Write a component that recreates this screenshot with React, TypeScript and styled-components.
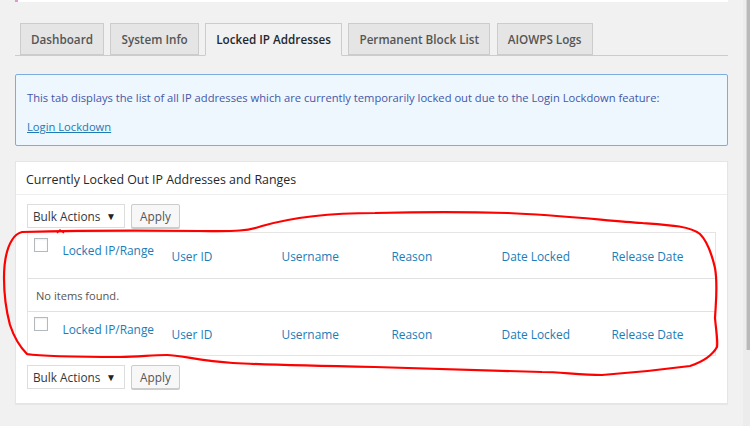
import React from 'react';
import styled, { createGlobalStyle } from 'styled-components';

const GlobalStyle = createGlobalStyle`
  html, body {
    margin: 0;
    padding: 0;
    background: #f1f1f1;
  }
  body {
    font-family: "Open Sans", "Noto Sans", sans-serif;
    color: #444;
  }
  * {
    box-sizing: border-box;
  }
`;

const Screen = styled.div`
  position: relative;
  display: grid;
  grid-template-columns: 743px 7px;
  width: 750px;
  height: 426px;
  overflow: hidden;
  background: #f1f1f1;
`;

const Main = styled.div`
  min-width: 0;
  padding: 0 15px 0 15px;
`;

const Scrollbar = styled.div`
  display: flex;
  justify-content: flex-end;
  align-items: flex-start;
  height: 426px;
  background: #ececec;
`;

const Thumb = styled.div`
  width: 4px;
  height: 350px;
  background: #b9b9b9;
  border-left: 1px solid #d6d6d6;
`;

const TopStrip = styled.div`
  height: 2px;
  background: #fff;
  border-left: 3px solid #dd9cc6;
`;

const TabNav = styled.nav`
  display: flex;
  align-items: flex-end;
  gap: 6.5px;
  margin-top: 21px;
  padding-left: 5px;
  border-bottom: 1px solid #ccc;
`;

const Tab = styled.a<{ $active?: boolean }>`
  display: block;
  height: ${(p) => (p.$active ? '33px' : '32px')};
  margin-bottom: ${(p) => (p.$active ? '-1px' : '0')};
  padding: 0 10px;
  line-height: 31px;
  font-size: 11.7px;
  font-weight: 600;
  white-space: nowrap;
  color: ${(p) => (p.$active ? '#23282d' : '#555')};
  background: ${(p) => (p.$active ? '#f1f1f1' : '#e5e5e5')};
  border: 1px solid #ccc;
  border-bottom-color: ${(p) => (p.$active ? '#f1f1f1' : '#ccc')};
  text-decoration: none;
`;

const InfoBox = styled.div`
  margin-top: 18px;
  padding: 14px 11px 10px;
  background: #eef6fe;
  border: 1px solid #7aaee0;
  border-radius: 2px;
  font-size: 11.2px;
  line-height: 17px;
  color: #4458a6;
`;

const InfoText = styled.p`
  margin: 0;
  white-space: nowrap;
`;

const InfoLink = styled.a`
  display: inline-block;
  margin-top: 12px;
  color: #1e7ab4;
  text-decoration: underline;
`;

const Panel = styled.section`
  margin-top: 15px;
  background: #fff;
  border: 1px solid #e5e5e5;
  box-shadow: 0 1px 1px rgba(0, 0, 0, 0.04);
`;

const PanelTitle = styled.h2`
  margin: 0;
  padding: 10px 10px 6px;
  font-size: 12.4px;
  font-weight: 400;
  line-height: 16px;
  color: #23282d;
  border-bottom: 1px solid #eee;
`;

const PanelBody = styled.div`
  padding: 9px 11px 14px;
`;

const TableNav = styled.div<{ $bottom?: boolean }>`
  display: flex;
  gap: 6px;
  margin: ${(p) => (p.$bottom ? '9px 0 0' : '0 0 4px')};
`;

const Select = styled.div`
  display: flex;
  align-items: center;
  justify-content: space-between;
  width: 98px;
  height: 24px;
  padding: 0 8px 0 5px;
  background: #fff;
  border: 1px solid #ddd;
  font-size: 11.8px;
  color: #32373c;
`;

const Caret = styled.span`
  font-size: 10px;
  line-height: 1;
  color: #222;
`;

const Button = styled.button`
  width: 49px;
  height: 24px;
  padding: 0;
  font-family: inherit;
  font-size: 11.8px;
  color: #555;
  background: #f7f7f7;
  border: 1px solid #ccc;
  border-radius: 2px;
  box-shadow: 0 1px 0 #ccc;
`;

const Table = styled.table`
  width: 100%;
  table-layout: fixed;
  border-collapse: collapse;
  border: 1px solid #e5e5e5;
`;

const HeadRow = styled.tr`
  height: 46px;
  border-bottom: 1px solid #e1e1e1;
`;

const FootRow = styled.tr`
  height: 44px;
  border-top: 1px solid #e1e1e1;
`;

const HeadCell = styled.th<{ $top?: boolean; $check?: boolean }>`
  padding: ${(p) => (p.$check ? '5px 0 0 6px' : p.$top ? '8px 10px 0' : '0 10px')};
  vertical-align: ${(p) => (p.$top ? 'top' : 'middle')};
  text-align: left;
  font-weight: 400;
  font-size: 11.9px;
  line-height: 18px;
  white-space: nowrap;
`;

const SortLink = styled.a`
  color: #1a7db8;
  text-decoration: none;
`;

const Checkbox = styled.span`
  display: block;
  width: 14px;
  height: 14px;
  background: #fff;
  border: 1px solid #b4b9be;
  box-shadow: inset 0 1px 2px rgba(0, 0, 0, 0.07);
`;

const EmptyCell = styled.td`
  height: 33px;
  padding: 0 8px;
  font-size: 11.1px;
  color: #555;
`;

const Overlay = styled.svg`
  position: absolute;
  top: 0;
  left: 0;
  pointer-events: none;
`;

const columns = ['User ID', 'Username', 'Reason', 'Date Locked', 'Release Date'];

const HeaderCells = () => (
  <>
    <HeadCell $check $top>
      <Checkbox />
    </HeadCell>
    <HeadCell $top>
      <SortLink>Locked IP/Range</SortLink>
    </HeadCell>
    {columns.map((c) => (
      <HeadCell key={c}>
        <SortLink>{c}</SortLink>
      </HeadCell>
    ))}
  </>
);

const Bulk = ({ bottom }: { bottom?: boolean }) => (
  <TableNav $bottom={bottom}>
    <Select>
      <span>Bulk Actions</span>
      <Caret>▼</Caret>
    </Select>
    <Button>Apply</Button>
  </TableNav>
);

const scribble =
  'M22 232 C60 231 120 230 200 231 C230 231 245 232 262 226 C290 218 330 213 375 213 C420 212 470 212 508 213 C560 215 610 221 642 223 C670 225 690 226 700 234 C708 242 712 255 715 268 C718 285 716 300 715 318 C716 330 718 340 717 347 C712 356 702 362 690 366 C660 370 630 373 602 375 C580 375 560 372 542 372 C500 371 440 369 375 367 C320 366 270 365 233 363 C200 361 180 355 167 355 C150 355 140 357 120 357 C90 357 45 357 27 354 C18 345 14 337 10 325 C6 310 4 295 4 278 C4 262 7 248 12 240 C15 235 18 233 22 232';

export default function App() {
  return (
    <>
      <GlobalStyle />
      <Screen>
        <Main>
          <TopStrip />
          <TabNav>
            <Tab>Dashboard</Tab>
            <Tab>System Info</Tab>
            <Tab $active>Locked IP Addresses</Tab>
            <Tab>Permanent Block List</Tab>
            <Tab>AIOWPS Logs</Tab>
          </TabNav>
          <InfoBox>
            <InfoText>
              This tab displays the list of all IP addresses which are currently temporarily locked out due to the
              Login Lockdown feature:
            </InfoText>
            <InfoLink>Login Lockdown</InfoLink>
          </InfoBox>
          <Panel>
            <PanelTitle>Currently Locked Out IP Addresses and Ranges</PanelTitle>
            <PanelBody>
              <Bulk />
              <Table>
                <colgroup>
                  <col style={{ width: 25 }} />
                  <col style={{ width: 109 }} />
                  <col style={{ width: 110 }} />
                  <col style={{ width: 110 }} />
                  <col style={{ width: 110 }} />
                  <col style={{ width: 110 }} />
                  <col />
                </colgroup>
                <thead>
                  <HeadRow>
                    <HeaderCells />
                  </HeadRow>
                </thead>
                <tbody>
                  <tr>
                    <EmptyCell colSpan={7}>No items found.</EmptyCell>
                  </tr>
                </tbody>
                <tfoot>
                  <FootRow>
                    <HeaderCells />
                  </FootRow>
                </tfoot>
              </Table>
              <Bulk bottom />
            </PanelBody>
          </Panel>
        </Main>
        <Scrollbar>
          <Thumb />
        </Scrollbar>
        <Overlay width={750} height={426} viewBox="0 0 750 426">
          <path d={scribble} fill="none" stroke="#f00" strokeWidth={2.2} strokeLinejoin="round" strokeLinecap="round" />
          <path d="M57 233 L60 230 L64 233" fill="none" stroke="#f00" strokeWidth={1.5} />
        </Overlay>
      </Screen>
    </>
  );
}
